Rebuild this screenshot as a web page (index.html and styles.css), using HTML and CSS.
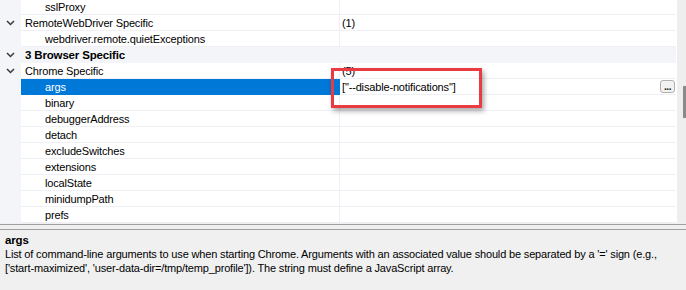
FILE: index.html
```
<!DOCTYPE html>
<html>
<head>
<meta charset="utf-8">
<link rel="stylesheet" href="styles.css">
</head>
<body>
<div class="app">
  <div class="grid">
    <div class="rows">
      <div class="row first"><span class="gut"></span><span class="name prop">sslProxy</span><span class="val"></span></div>
      <div class="row"><span class="gut"><svg class="chev" width="9" height="6" viewBox="0 0 9 6"><path d="M1 1 L4.5 4.5 L8 1" fill="none" stroke="#3a3a3a" stroke-width="1.5"/></svg></span><span class="name">RemoteWebDriver Specific</span><span class="val">(1)</span></div>
      <div class="row"><span class="gut"></span><span class="name prop">webdriver.remote.quietExceptions</span><span class="val"></span></div>
      <div class="row group"><span class="gut"><svg class="chev" width="9" height="6" viewBox="0 0 9 6"><path d="M1 1 L4.5 4.5 L8 1" fill="none" stroke="#3a3a3a" stroke-width="1.5"/></svg></span><span class="gname">3 Browser Specific</span></div>
      <div class="row"><span class="gut"><svg class="chev" width="9" height="6" viewBox="0 0 9 6"><path d="M1 1 L4.5 4.5 L8 1" fill="none" stroke="#3a3a3a" stroke-width="1.5"/></svg></span><span class="name">Chrome Specific</span><span class="val">(5)</span></div>
      <div class="row sel"><span class="gut"></span><span class="name prop">args</span><span class="val"><span class="valtext">["--disable-notifications"]</span><span class="dots">...</span></span></div>
      <div class="row"><span class="gut"></span><span class="name prop">binary</span><span class="val"></span></div>
      <div class="row"><span class="gut"></span><span class="name prop">debuggerAddress</span><span class="val"></span></div>
      <div class="row"><span class="gut"></span><span class="name prop">detach</span><span class="val"></span></div>
      <div class="row"><span class="gut"></span><span class="name prop">excludeSwitches</span><span class="val"></span></div>
      <div class="row"><span class="gut"></span><span class="name prop">extensions</span><span class="val"></span></div>
      <div class="row"><span class="gut"></span><span class="name prop">localState</span><span class="val"></span></div>
      <div class="row"><span class="gut"></span><span class="name prop">minidumpPath</span><span class="val"></span></div>
      <div class="row last"><span class="gut"></span><span class="name prop">prefs</span><span class="val"></span></div>
    </div>
    <div class="scrollbar"><div class="thumb"></div></div>
  </div>
  <div class="splitter"></div>
  <div class="desc">
    <div class="dtitle">args</div>
    <div class="dtext">List of command-line arguments to use when starting Chrome. Arguments with an associated value should be separated by a '=' sign (e.g., ['start-maximized', 'user-data-dir=/tmp/temp_profile']). The string must define a JavaScript array.</div>
  </div>
  <div class="callout"></div>
</div>
</body>
</html>
```
FILE: styles.css
```
html, body {
  margin: 0;
  padding: 0;
  background: #f0f0f0;
}
.app {
  position: relative;
  width: 686px;
  height: 290px;
  overflow: hidden;
  font-family: "Liberation Sans", Arial, sans-serif;
  font-size: 11px;
  letter-spacing: -0.16px;
  color: #000;
}
.grid {
  display: flex;
  height: 223px;
  background: #fff;
  overflow: hidden;
}
.rows {
  flex: 1;
  margin-top: -1px;
}
.row {
  display: grid;
  grid-template-columns: 21px 319px 1fr;
  height: 16px;
}
.gut {
  background: #f3f5f9;
  display: flex;
  align-items: center;
  padding-left: 6px;
}
.chev {
  display: block;
}
.name {
  border-bottom: 1px solid #eef0f5;
  border-right: 1px solid #eef0f5;
  padding-left: 4px;
  padding-top: 1px;
  line-height: 14px;
  white-space: nowrap;
}
.name.prop {
  padding-left: 24px;
}
.val {
  border-bottom: 1px solid #eef0f5;
  padding-left: 2px;
  padding-top: 1px;
  line-height: 14px;
  display: flex;
  align-items: flex-start;
}
.group {
  grid-template-columns: 21px 1fr;
  background: #f3f5f9;
}
.gname {
  font-weight: bold;
  padding-left: 4px;
  padding-top: 1px;
  line-height: 14px;
  font-size: 11.5px;
}
.sel .name {
  background: #0078d7;
  color: #fff;
  border-bottom-color: #0078d7;
  border-right-color: #0078d7;
}
.dots {
  margin-left: auto;
  margin-right: 1px;
  margin-top: 0;
  width: 15px;
  height: 13px;
  box-sizing: border-box;
  border: 1px solid #b0b0b0;
  border-radius: 3px;
  background: #f2f2f2;
  font-size: 10px;
  font-weight: bold;
  line-height: 12px;
  text-align: center;
  letter-spacing: -0.5px;
  color: #222;
}
.scrollbar {
  width: 9px;
  margin-left: 1px;
  background: #eeeeee;
}
.thumb {
  margin-top: 86px;
  margin-left: 6px;
  width: 3px;
  height: 32px;
  background: #8a8a8a;
}
.splitter {
  height: 4px;
  margin-top: 1px;
  border-top: 1px solid #a0a0a0;
  border-bottom: 1px solid #a0a0a0;
}
.desc {
  padding: 3px 5px 0 5px;
  line-height: 14px;
}
.dtitle {
  font-weight: bold;
  font-size: 11.5px;
}
.callout {
  position: absolute;
  left: 331px;
  top: 68px;
  width: 151px;
  height: 40px;
  box-sizing: border-box;
  border: 3px solid #ea3b43;
  box-shadow: 2px 3px 5px rgba(0, 0, 0, 0.35);
}
```
